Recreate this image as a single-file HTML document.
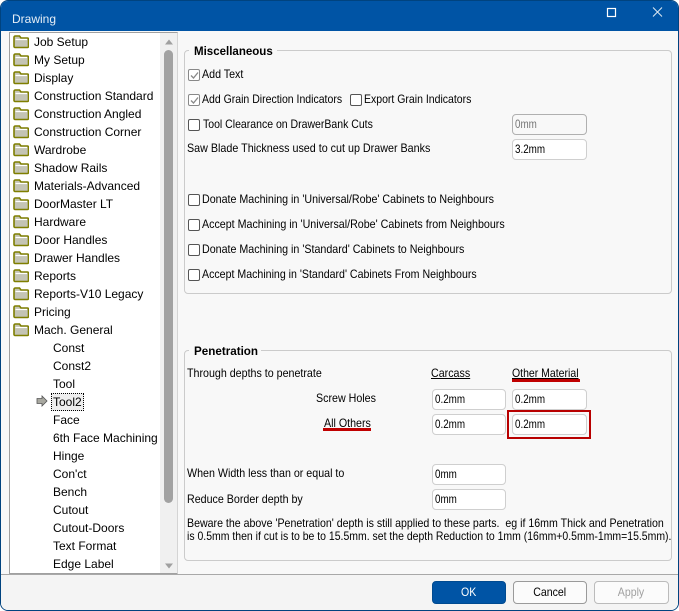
<!DOCTYPE html>
<html><head><meta charset="utf-8"><style>
html,body{margin:0;padding:0;background:#fff;width:679px;height:611px;overflow:hidden}
#w{position:absolute;left:0;top:0;width:677px;height:609px;border:1px solid #00437f;border-radius:8px;background:#f8f8f8;overflow:hidden;font:12px "Liberation Sans",sans-serif;color:#000}
#w div,#w svg{position:absolute}
.t{white-space:nowrap;line-height:16px;height:16px}
.n{transform:scaleX(.89);transform-origin:0 50%}
.m{transform:scaleX(.875);transform-origin:0 50%}
.tb{position:absolute;background:#fff;border:1px solid #cfcfcf;border-radius:4px;box-sizing:border-box;height:21px;width:75px;line-height:19px;padding-left:2px;white-space:nowrap}
.i{display:inline-block;transform:scaleX(.82);transform-origin:0 50%}
.g{border:1px solid #cbcbcb;border-radius:4px;box-sizing:border-box}
.c{width:10px;height:10px;border:1px solid #555;border-radius:2px;background:#fff}
.b{font-weight:bold}
.btn{border:1px solid #9a9a9a;border-radius:4px;box-sizing:border-box;width:74px;height:23px;text-align:center;line-height:21px;background:#fbfbfb}
.k{display:inline-block;transform:scaleX(.88)}
</style></head><body><div id="w">
<div style="left:0;top:0;width:677px;height:30px;background:#0054a5"></div>
<div class="t" style="left:11px;top:10px;color:#e6eef6;font-size:12px">Drawing</div>
<svg style="left:600px;top:0" width="76" height="24"><rect x="6.500" y="7.500" width="8" height="8" fill="none" stroke="#fff" stroke-width="1.200"/><path d="M52 6.500l9 9M61 6.500l-9 9" stroke="#dfe9f3" fill="none"/></svg>

<div style="left:8px;top:31px;width:169px;height:543px;background:#fff;border-left:1px solid #a0a0a0;border-top:1px solid #a0a0a0;border-bottom:2px solid #a0a0a0;border-right:1px solid #d4d4d4;box-sizing:border-box"></div>
<div style="left:159px;top:32px;width:17px;height:540px;background:#f0f0f0"></div>
<div style="left:163px;top:49px;width:9px;height:453px;background:#a2a2a2;border-radius:5px"></div>
<svg style="left:163px;top:37px" width="10" height="8"><path d="M1 6.500L5 1.500L9 6.500Z" fill="#a0a0a0"/></svg>
<svg style="left:163px;top:561px" width="10" height="8"><path d="M1 1.500L5 6.500L9 1.500Z" fill="#a0a0a0"/></svg>

<svg style="left:12px;top:32px" width="16" height="310">
<defs><g id="f"><path d="M1 4.500V13.500C1 14 1.500 14.500 2 14.500H14.500C15 14.500 15.500 14 15.500 13.500V6C15.500 5.500 15 5 14.500 5H8L6.500 3H2.500C1.500 3 1 3.500 1 4.500Z" fill="#c4c4b4" stroke="#7f7f00" stroke-width="1.600"/><path d="M2.500 6.500H14" stroke="#fff" stroke-width="1.200"/></g></defs>
<use href="#f" y="0"/><use href="#f" y="18"/><use href="#f" y="36"/><use href="#f" y="54"/><use href="#f" y="72"/><use href="#f" y="90"/><use href="#f" y="108"/><use href="#f" y="126"/><use href="#f" y="144"/><use href="#f" y="162"/><use href="#f" y="180"/><use href="#f" y="198"/><use href="#f" y="216"/><use href="#f" y="234"/><use href="#f" y="252"/><use href="#f" y="270"/><use href="#f" y="288"/>
</svg>
<div class="t" style="left:33px;top:33px">Job Setup</div>
<div class="t" style="left:33px;top:51px">My Setup</div>
<div class="t" style="left:33px;top:69px">Display</div>
<div class="t" style="left:33px;top:87px">Construction Standard</div>
<div class="t" style="left:33px;top:105px">Construction Angled</div>
<div class="t" style="left:33px;top:123px">Construction Corner</div>
<div class="t" style="left:33px;top:141px">Wardrobe</div>
<div class="t" style="left:33px;top:159px">Shadow Rails</div>
<div class="t" style="left:33px;top:177px">Materials-Advanced</div>
<div class="t" style="left:33px;top:195px">DoorMaster LT</div>
<div class="t" style="left:33px;top:213px">Hardware</div>
<div class="t" style="left:33px;top:231px">Door Handles</div>
<div class="t" style="left:33px;top:249px">Drawer Handles</div>
<div class="t" style="left:33px;top:267px">Reports</div>
<div class="t" style="left:33px;top:285px">Reports-V10 Legacy</div>
<div class="t" style="left:33px;top:303px">Pricing</div>
<div class="t" style="left:33px;top:321px">Mach. General</div>
<div class="t" style="left:52px;top:339px">Const</div>
<div class="t" style="left:52px;top:357px">Const2</div>
<div class="t" style="left:52px;top:375px">Tool</div>
<svg style="left:35px;top:394px" width="12" height="12"><path d="M1 3.500H6V1L11 6L6 11V8.500H1Z" fill="#a8a8a0" stroke="#555" stroke-width=".8"/></svg>
<div style="left:50px;top:392px;width:33px;height:18px;background:#eee;border:1px dotted #000;box-sizing:border-box"></div>
<div class="t" style="left:52px;top:393px">Tool2</div>
<div class="t" style="left:52px;top:411px">Face</div>
<div class="t" style="left:52px;top:429px">6th Face Machining</div>
<div class="t" style="left:52px;top:447px">Hinge</div>
<div class="t" style="left:52px;top:465px">Con'ct</div>
<div class="t" style="left:52px;top:483px">Bench</div>
<div class="t" style="left:52px;top:501px">Cutout</div>
<div class="t" style="left:52px;top:519px">Cutout-Doors</div>
<div class="t" style="left:52px;top:537px">Text Format</div>
<div class="t" style="left:52px;top:555px">Edge Label</div>

<div class="g" style="left:183px;top:49px;width:488px;height:244px"></div>
<div style="left:188px;top:42px;width:88px;height:16px;background:#f8f8f8"></div>
<div class="t b" style="left:193px;top:42px;transform:scaleX(.96);transform-origin:0 50%">Miscellaneous</div>
<div class="c" style="left:187px;top:68px;border-color:#888"></div>
<svg style="left:187px;top:68px" width="13" height="13"><path d="M3 6.500L5.500 9L10 3.500" stroke="#888" stroke-width="1.300" fill="none"/></svg>
<div class="t n" style="left:201px;top:65px">Add Text</div>
<div class="c" style="left:187px;top:93px;border-color:#888"></div>
<svg style="left:187px;top:93px" width="13" height="13"><path d="M3 6.500L5.500 9L10 3.500" stroke="#888" stroke-width="1.300" fill="none"/></svg>
<div class="t m" style="left:201px;top:90px">Add Grain Direction Indicators</div>
<div class="c" style="left:349px;top:93px"></div>
<div class="t m" style="left:363px;top:90px">Export Grain Indicators</div>
<div class="c" style="left:187px;top:118px"></div>
<div class="t m" style="left:202px;top:115px">Tool Clearance on DrawerBank Cuts</div>
<div class="tb" style="left:511px;top:113px;background:#f8f8f8;border-color:#b0b0b0;color:#777"><span class="i">0mm</span></div>
<div class="t" style="left:186px;top:139px;transform:scaleX(.895);transform-origin:0 50%">Saw Blade Thickness used to cut up Drawer Banks</div>
<div class="tb" style="left:511px;top:138px"><span class="i">3.2mm</span></div>
<div class="c" style="left:187px;top:193px"></div>
<div class="t n" style="left:201px;top:190px">Donate Machining in 'Universal/Robe' Cabinets to Neighbours</div>
<div class="c" style="left:187px;top:218px"></div>
<div class="t n" style="left:201px;top:215px">Accept Machining in 'Universal/Robe' Cabinets from Neighbours</div>
<div class="c" style="left:187px;top:243px"></div>
<div class="t n" style="left:201px;top:240px">Donate Machining in 'Standard' Cabinets to Neighbours</div>
<div class="c" style="left:187px;top:268px"></div>
<div class="t" style="left:201px;top:265px;transform:scaleX(.884);transform-origin:0 50%">Accept Machining in 'Standard' Cabinets From Neighbours</div>

<div class="g" style="left:183px;top:349px;width:488px;height:211px"></div>
<div style="left:188px;top:342px;width:72px;height:16px;background:#f8f8f8"></div>
<div class="t b" style="left:193px;top:342px;transform:scaleX(.97);transform-origin:0 50%">Penetration</div>
<div class="t n" style="left:186px;top:364px">Through depths to penetrate</div>
<div class="t n" style="left:430px;top:364px;text-decoration:underline">Carcass</div>
<div class="t m" style="left:511px;top:364px;text-decoration:underline">Other Material</div>
<div style="left:511px;top:378px;width:68px;height:3px;background:#c00000"></div>
<div class="t n" style="left:315px;top:389px">Screw Holes</div>
<div class="t n" style="left:323px;top:414px">All Others</div>
<div style="left:322px;top:427px;width:48px;height:3px;background:#c00000"></div>
<div class="tb" style="left:431px;top:388px;width:74px"><span class="i">0.2mm</span></div>
<div class="tb" style="left:511px;top:388px"><span class="i">0.2mm</span></div>
<div class="tb" style="left:431px;top:413px;width:74px"><span class="i">0.2mm</span></div>
<div class="tb" style="left:511px;top:413px"><span class="i">0.2mm</span></div>
<div style="left:506px;top:409px;width:84px;height:29px;border:2px solid #b80000;box-sizing:border-box"></div>
<div class="t n" style="left:186px;top:464px">When Width less than or equal to</div>
<div class="tb" style="left:431px;top:463px;width:74px"><span class="i">0mm</span></div>
<div class="t n" style="left:186px;top:490px">Reduce Border depth by</div>
<div class="tb" style="left:431px;top:488px;width:74px"><span class="i">0mm</span></div>
<div class="t" style="left:186px;top:514px;transform:scaleX(.884);transform-origin:0 50%">Beware the above 'Penetration' depth is still applied to these parts.&nbsp; eg if 16mm Thick and Penetration</div>
<div class="t" style="left:186px;top:527px;transform:scaleX(.872);transform-origin:0 50%">is 0.5mm then if cut is to be to 15.5mm. set the depth Reduction to 1mm (16mm+0.5mm-1mm=15.5mm).</div>

<div style="left:0;top:574px;width:677px;height:35px;background:#f4f4f4"></div>
<div style="left:0;top:573px;width:677px;height:1px;background:#a8a8a8"></div>
<div class="btn" style="left:431px;top:580px;background:#0054a5;border-color:#004a90;color:#fff"><span class="k">OK</span></div>
<div class="btn" style="left:512px;top:580px"><span class="k">Cancel</span></div>
<div class="btn" style="left:593px;top:580px;width:75px;border-color:#bbb;color:#a0a0a0"><span class="k">Apply</span></div>
</div></body></html>
